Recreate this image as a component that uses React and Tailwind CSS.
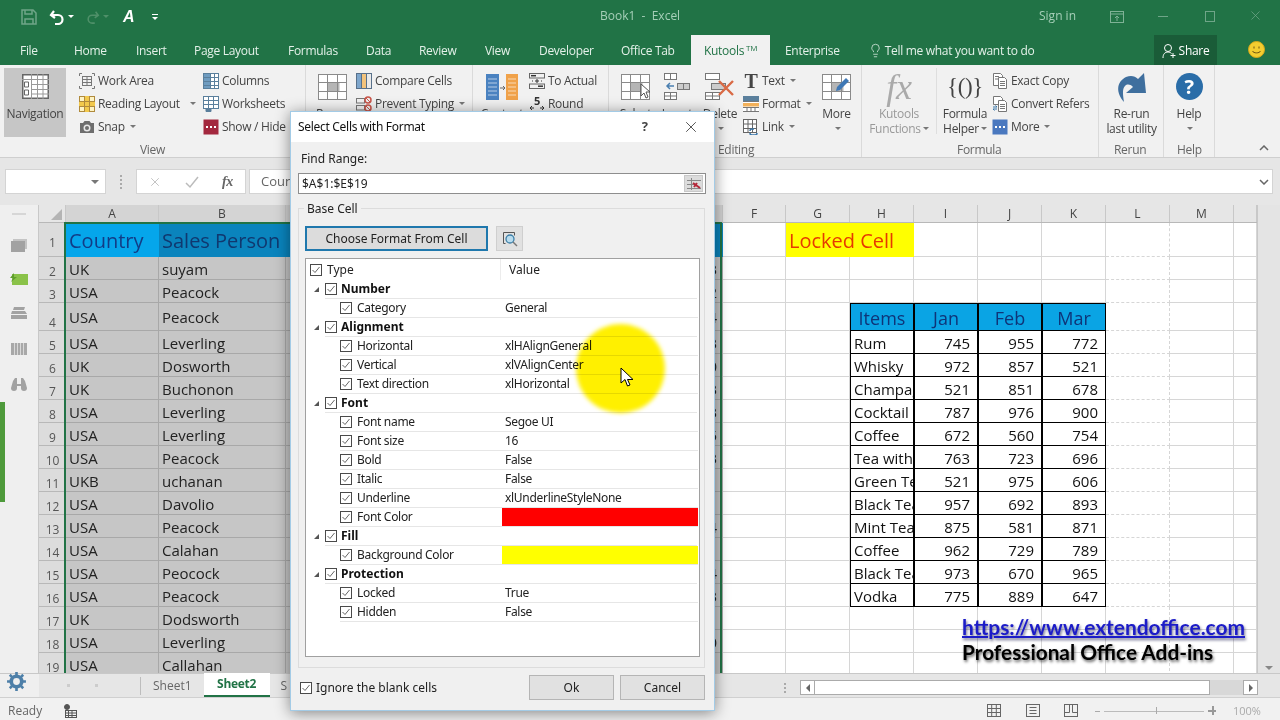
import { Lightbulb, X } from "lucide-react";

const COLS = ["w-[93px]", "w-[127px]", "w-[150px]", "w-[150px]", "w-[137px]", "w-[63px]", "w-[64px]", "w-[64px]", "w-[64px]", "w-[64px]", "w-[64px]", "w-[64px]", "w-[64px]", "w-[23px]"];
const LETTERS = ["A", "B", "C", "D", "E", "F", "G", "H", "I", "J", "K", "L", "M", ""];
const ROW_HEIGHTS = ["h-[34px]", "h-[23px]", "h-[23px]", "h-[28px]", "h-[23px]", "h-[23px]", "h-[23px]", "h-[23px]", "h-[23px]", "h-[23px]", "h-[23px]", "h-[23px]", "h-[23px]", "h-[23px]", "h-[23px]", "h-[23px]", "h-[23px]", "h-[23px]", "h-[23px]"];
const E_DIGITS = ["", "3", "2", "4", "3", "0", "3", "3", "5", "3", "1", "1", "4", "1", "4", "3", "1", "0", "1"];

const SALES = [
  ["Country", "Sales Person"],
  ["UK", "suyam"],
  ["USA", "Peacock"],
  ["USA", "Peacock"],
  ["USA", "Leverling"],
  ["UK", "Dosworth"],
  ["UK", "Buchonon"],
  ["USA", "Leverling"],
  ["USA", "Leverling"],
  ["USA", "Peacock"],
  ["UKB", "uchanan"],
  ["USA", "Davolio"],
  ["USA", "Peacock"],
  ["USA", "Calahan"],
  ["USA", "Peocock"],
  ["USA", "Peacock"],
  ["UK", "Dodsworth"],
  ["USA", "Leverling"],
  ["USA", "Callahan"],
];

const ITEMS = [
  ["Items", "Jan", "Feb", "Mar"],
  ["Rum", 745, 955, 772],
  ["Whisky", 972, 857, 521],
  ["Champagne", 521, 851, 678],
  ["Cocktail", 787, 976, 900],
  ["Coffee", 672, 560, 754],
  ["Tea with", 763, 723, 696],
  ["Green Tea", 521, 975, 606],
  ["Black Tea", 957, 692, 893],
  ["Mint Tea", 875, 581, 871],
  ["Coffee", 962, 729, 789],
  ["Black Tea", 973, 670, 965],
  ["Vodka", 775, 889, 647],
];

const TREE = [
  { group: "Number" },
  { name: "Category", value: "General" },
  { group: "Alignment" },
  { name: "Horizontal", value: "xlHAlignGeneral" },
  { name: "Vertical", value: "xlVAlignCenter" },
  { name: "Text direction", value: "xlHorizontal" },
  { group: "Font" },
  { name: "Font name", value: "Segoe UI" },
  { name: "Font size", value: "16" },
  { name: "Bold", value: "False" },
  { name: "Italic", value: "False" },
  { name: "Underline", value: "xlUnderlineStyleNone" },
  { name: "Font Color", swatch: "bg-[#ff0000]" },
  { group: "Fill" },
  { name: "Background Color", swatch: "bg-[#ffff00]" },
  { group: "Protection" },
  { name: "Locked", value: "True" },
  { name: "Hidden", value: "False" },
];

const TABS = [
  ["File", "w-[74px] pl-[20px]"],
  ["Home", "w-[62px]"],
  ["Insert", "w-[58px]"],
  ["Page Layout", "w-[94px]"],
  ["Formulas", "w-[78px]"],
  ["Data", "w-[53px]"],
  ["Review", "w-[66px]"],
  ["View", "w-[54px]"],
  ["Developer", "w-[82px]"],
  ["Office Tab", "w-[70px]"],
];

// little ribbon drawings
function GridIcon({ className = "w-[29px] h-[26px]", shade }) {
  return (
    <svg viewBox="0 0 29 26" className={className} fill="none" stroke="#8a8a8a" strokeWidth="1">
      <rect x="0.5" y="0.5" width="28" height="25" fill="#fff" />
      {shade && <rect x="9.5" y="8.5" width="12" height="9" fill="#b5b5b5" stroke="none" />}
      <path d="M9.5 0v26M19.5 0v26M0 8.5h29M0 17.5h29" />
    </svg>
  );
}

function SmallIcon({ kind }) {
  const base = "w-[16px] h-[16px] shrink-0";
  if (kind === "workarea") {
    return (
      <svg viewBox="0 0 16 16" className={base} fill="none" stroke="#777">
        <path d="M.5 3V.5H3M13 .5h2.5V3M.5 13v2.5H3M13 15.5h2.5V13" />
        <rect x="3.5" y="3.5" width="9" height="9" />
        <path d="M3.5 6.5h9M3.5 9.5h9M8 3.5v9" />
      </svg>
    );
  }
  if (kind === "reading") {
    return (
      <svg viewBox="0 0 16 16" className={base} fill="#fdf3c4" stroke="#b08a3c">
        <rect x=".5" y=".5" width="15" height="15" />
        <rect x="0" y="6" width="16" height="4" fill="#f2c94c" stroke="none" />
        <rect x="6" y="0" width="4" height="16" fill="#f2c94c" stroke="none" />
        <path d="M5.5 0v16M10.5 0v16M0 5.5h16M0 10.5h16" fill="none" />
      </svg>
    );
  }
  if (kind === "snap") {
    return (
      <svg viewBox="0 0 16 16" className={base}>
        <path d="M1 4h3l1.500-2h5L12 4h3v10H1z" fill="#6e6e6e" />
        <circle cx="8" cy="9" r="3.500" fill="#e8e8e8" />
        <circle cx="8" cy="9" r="2" fill="#6e6e6e" />
      </svg>
    );
  }
  if (kind === "columns") {
    return (
      <svg viewBox="0 0 16 16" className={base} fill="none" stroke="#5a7f9c">
        <rect x=".5" y=".5" width="15" height="15" fill="#fff" />
        <rect x="1" y="1" width="6" height="14" fill="#6f9cc0" stroke="none" />
        <path d="M7.500 0v16M11.500 0v16M0 4.500h16M0 8.500h16M0 12.500h16" />
      </svg>
    );
  }
  if (kind === "worksheets") {
    return (
      <svg viewBox="0 0 16 16" className={base} fill="#fff" stroke="#5a7f9c">
        <rect x=".5" y=".5" width="15" height="12" />
        <path d="M0 4.500h16M0 8.500h16M5.500 0v12M10.500 0v12" fill="none" />
        <path d="M3 13h5v2.500H3z" fill="#5a7f9c" />
      </svg>
    );
  }
  if (kind === "showhide") {
    return (
      <svg viewBox="0 0 16 16" className={base}>
        <rect width="15" height="15" x=".5" y=".5" fill="#a3283e" />
        <rect x="3" y="7" width="2" height="2" fill="#fff" />
        <rect x="7" y="7" width="2" height="2" fill="#fff" />
        <rect x="11" y="7" width="2" height="2" fill="#fff" />
      </svg>
    );
  }
  if (kind === "compare") {
    return (
      <svg viewBox="0 0 16 16" className={base} stroke="#58708a">
        <rect x=".5" y=".5" width="15" height="15" fill="#fff" />
        <rect x="1" y="1" width="4" height="14" fill="#7ea6cc" stroke="none" />
        <rect x="6" y="1" width="4" height="14" fill="#f3c37c" stroke="none" />
        <rect x="11" y="1" width="4" height="14" fill="#e9e9e9" stroke="none" />
        <path d="M5.500 0v16M10.500 0v16" fill="none" />
      </svg>
    );
  }
  if (kind === "prevent") {
    return (
      <svg viewBox="0 0 16 16" className={base} fill="none">
        <rect x=".5" y="2.500" width="8" height="4.500" stroke="#777" />
        <rect x=".5" y="9.500" width="8" height="4.500" stroke="#777" />
        <circle cx="12" cy="4" r="3" stroke="#c9564a" strokeWidth="1.500" />
        <circle cx="12" cy="12" r="3" stroke="#c9564a" strokeWidth="1.500" />
        <path d="M10 2l4 4M10 10l4 4" stroke="#c9564a" />
      </svg>
    );
  }
  if (kind === "actual") {
    return (
      <svg viewBox="0 0 16 16" className={base} fill="none" stroke="#666">
        <rect x=".5" y=".5" width="15" height="4.500" />
        <path d="M2 2.700h5" strokeWidth="1.500" stroke="#333" />
        <rect x=".5" y="11" width="15" height="4.500" />
        <path d="M9 13.200h5" strokeWidth="1.500" stroke="#333" />
        <path d="M8 6v4M6 8h4M3 8h1M12 8h1" stroke="#333" />
      </svg>
    );
  }
  if (kind === "round") {
    return (
      <svg viewBox="0 0 16 16" className={base} fill="none" stroke="#333">
        <path d="M1 12h4M1 12l2-2M1 12l2 2M11 12h4M15 12l-2-2M15 12l-2 2" />
        <text x="8" y="9" textAnchor="middle" fontSize="11" fontWeight="700" fill="#333" stroke="none" fontFamily="Open Sans">5</text>
      </svg>
    );
  }
  if (kind === "t") {
    return (
      <svg viewBox="0 0 16 16" className={base}>
        <text x="8" y="15" textAnchor="middle" fontSize="20" fontWeight="700" fill="#444" fontFamily="Liberation Serif">T</text>
      </svg>
    );
  }
  if (kind === "format") {
    return (
      <svg viewBox="0 0 16 16" className={base}>
        <rect width="16" height="16" fill="#fff" />
        <rect y="0" width="16" height="5" fill="#5a7f9c" />
        <rect y="7" width="16" height="3.500" fill="#f3b15a" />
        <path d="M0 5.500h16M0 11.500h16M0 15.500h16M4 11v5M8 11v5M12 11v5" stroke="#777" />
      </svg>
    );
  }
  if (kind === "link") {
    return (
      <svg viewBox="0 0 16 16" className={base} fill="none" stroke="#666">
        <rect x=".5" y=".5" width="13" height="13" fill="#fff" />
        <path d="M5 0v14M9.500 0v14M0 5h14M0 9.500h14" />
        <path d="M7 12a2 2 0 0 1 2-2h2M14 14a2 2 0 0 1-2 2h-3a2 2 0 0 1-2-2" stroke="#3a76a8" strokeWidth="1.500" />
      </svg>
    );
  }
  if (kind === "copy") {
    return (
      <svg viewBox="0 0 16 16" className={base} fill="#fff" stroke="#777">
        <path d="M1.500.5h7l2 2v10h-9z" />
        <path d="M6.500 4.500h6l2 2v9h-8z" />
        <path d="M3 3.500h4M3 6h3M8 8.500h5M8 10.500h5M8 12.500h5" fill="none" />
      </svg>
    );
  }
  if (kind === "refers") {
    return (
      <svg viewBox="0 0 16 16" className={base} fill="#fff" stroke="#777">
        <path d="M1.500.5h7l2 2v6h-9z" />
        <path d="M6.500 4.500h6l2 2v9h-8z" />
        <path d="M1 11h4l-1.500-1.500M5 13H1l1.500 1.500" fill="none" stroke="#3a76a8" />
        <path d="M8 8.500h5M8 10.500h5M8 12.500h5" fill="none" />
      </svg>
    );
  }
  return (
    <svg viewBox="0 0 16 16" className={base}>
      <rect width="15" height="15" x=".5" y=".5" fill="#4a78bf" />
      <rect x="3" y="7" width="2" height="2" fill="#fff" />
      <rect x="7" y="7" width="2" height="2" fill="#fff" />
      <rect x="11" y="7" width="2" height="2" fill="#fff" />
    </svg>
  );
}

function Caret({ className = "" }) {
  return <span className={`inline-block w-0 h-0 border-x-[3px] border-x-transparent border-t-[3px] border-t-[#777] ${className}`} />;
}

function RibbonItem({ icon, label, caret }) {
  return (
    <div className="h-[23px] flex items-center gap-[3px] whitespace-nowrap">
      <SmallIcon kind={icon} />
      <span>{label}</span>
      {caret && <Caret className="ml-[2px]" />}
    </div>
  );
}

function RibbonGroup({ className, label, labelClass = "", children }) {
  return (
    <div className={`relative h-full border-r border-[#dadada] shrink-0 ${className}`}>
      <div className="flex h-[73px] pt-[3px]">{children}</div>
      {label && <div className={`absolute top-[76px] text-[#666] text-[12px] ${labelClass}`}>{label}</div>}
    </div>
  );
}

function BigButton({ className, icon, lines, caret, muted }) {
  return (
    <div className={`flex flex-col items-center shrink-0 ${muted ? "text-[#999]" : ""} ${className}`}>
      <div className="h-[37px] flex items-center">{icon}</div>
      <div className="leading-[15px] mt-[1px] text-center whitespace-nowrap">{lines[0]}</div>
      <div className="leading-[15px] text-center whitespace-nowrap h-[15px] flex items-center">
        {lines[1]}
        {caret && <Caret className="ml-[2px]" />}
      </div>
    </div>
  );
}

function Check({ className = "" }) {
  return (
    <svg viewBox="0 0 12 12" className={`w-[12px] h-[12px] shrink-0 ${className}`} fill="#fff" stroke="#4a4a4a">
      <rect x=".5" y=".5" width="11" height="11" />
      <path d="M2.500 6l2.500 2.500 4.500-5.500" fill="none" stroke="#666" />
    </svg>
  );
}

function TreeRow({ row }) {
  if (row.group) {
    return (
      <div className="h-[19px] flex items-center pl-[8px]">
        <span className="w-0 h-0 border-l-[5px] border-l-transparent border-b-[5px] border-b-[#555] mr-[6px]" />
        <div className="flex-1 h-full flex items-center border-b border-[#e6e6e6] mr-[2px]">
          <Check />
          <span className="ml-[4px] font-bold text-[#111]">{row.group}</span>
        </div>
      </div>
    );
  }
  return (
    <div className="h-[19px] flex pl-[34px] pr-[1px] tracking-[-0.3px]">
      <div className="flex-1 flex border-b border-[#e6e6e6]">
        <div className="w-[162px] flex items-center">
          <Check />
          <span className="ml-[5px]">{row.name}</span>
        </div>
        {row.swatch ? <div className={`flex-1 ${row.swatch}`} /> : <div className="pl-[3px] flex items-center">{row.value}</div>}
      </div>
    </div>
  );
}

function Dialog() {
  return (
    <div className="absolute left-[290px] top-[111px] w-[425px] h-[600px] border border-[#a3cbe6] bg-[#f0f0f0] shadow-[0_2px_14px_rgba(0,0,0,0.45)] flex flex-col text-[12px] text-[#222] tracking-normal font-['Noto_Sans',sans-serif]">
      <div className="h-[30px] bg-white flex items-center pl-[7px] text-[#111] shrink-0">
        <span className="tracking-[-0.3px]">Select Cells with Format</span>
        <span className="ml-auto mr-[34px] font-bold text-[13px] text-[#444]">?</span>
        <X className="w-[18px] h-[18px] mr-[14px] text-[#333]" strokeWidth={1.1} />
      </div>
      <div className="pl-[10px] pt-[9px] h-[24px] leading-[15px] shrink-0">Find Range:</div>
      <div className="ml-[7px] mt-[7px] w-[408px] h-[21px] border border-[#8e8e8e] bg-white flex items-center pl-[3px] shrink-0">
        <span>$A$1:$E$19</span>
        <div className="ml-auto mr-[2px] w-[19px] h-[17px] bg-[#dcdcdc] border border-[#c8c8c8] flex items-center justify-center">
          <svg viewBox="0 0 14 12" className="w-[14px] h-[12px]" fill="none">
            <path d="M0 2.500h14M0 6.500h7M0 10.500h14M4.500 0v12" stroke="#888" />
            <path d="M6 5l7 5M7 9l3-4" stroke="#b5283a" strokeWidth="2" />
          </svg>
        </div>
      </div>
      {/* Base Cell */}
      <div className="relative ml-[7px] mt-[14px] w-[407px] h-[460px] border border-[#dcdcdc] shrink-0 pt-[17px] pl-[6px]">
        <span className="absolute left-[5px] -top-[8px] bg-[#f0f0f0] px-[3px] leading-[15px]">Base Cell</span>
        <div className="flex gap-[8px]">
          <div className="w-[183px] h-[25px] border-2 border-[#1f78ad] bg-[#dcdcdc] flex items-center justify-center">Choose Format From Cell</div>
          <div className="w-[27px] h-[25px] border border-[#cfcfcf] bg-[#e1e1e1] flex items-center justify-center">
            <svg viewBox="0 0 16 16" className="w-[16px] h-[16px]" fill="none" stroke="#555">
              <path d="M3.500 12.500h-2v-11h11v3" />
              <circle cx="8" cy="8" r="4" fill="#b9dcee" stroke="#3c7fa8" strokeWidth="1.300" />
              <path d="M11 11l4 4" stroke="#777" strokeWidth="1.500" />
            </svg>
          </div>
        </div>
        <div className="mt-[7px] w-[395px] h-[399px] border border-[#a0a0a0] bg-white">
          <div className="h-[21px] flex items-center pl-[4px]">
            <Check />
            <span className="ml-[5px] w-[173px]">Type</span>
            <span className="pl-[8px] border-l border-[#ececec] h-full flex items-center">Value</span>
          </div>
          {TREE.map((row, i) => (
            <TreeRow key={i} row={row} />
          ))}
        </div>
      </div>
      <div className="flex items-center mt-[7px] pl-[9px]">
        <Check />
        <span className="ml-[4px]">Ignore the blank cells</span>
        <div className="ml-auto w-[85px] h-[25px] bg-[#e1e1e1] border border-[#b5b5b5] flex items-center justify-center">Ok</div>
        <div className="ml-[6px] mr-[9px] w-[85px] h-[25px] bg-[#e1e1e1] border border-[#b5b5b5] flex items-center justify-center">Cancel</div>
      </div>
    </div>
  );
}

function itemCell(rowIndex, colIndex) {
  // rows 4-16 hold the small table in columns H-K
  const tableRow = ITEMS[rowIndex - 3];
  if (!tableRow) return null;
  return tableRow[colIndex - 7];
}

function Cell({ rowIndex, colIndex }) {
  let width = COLS[colIndex];
  const selected = colIndex < 5;
  const isHeader = rowIndex === 0;
  let cls = selected ? "bg-[#c6c6c6] border-[#a8a8a8] leading-[20px]" : "border-[#d6d6d6] leading-[20px]";
  let text = "";
  let align = "pl-[3px]";

  if (colIndex < 2) text = SALES[rowIndex][colIndex];
  if (colIndex === 4 && rowIndex > 0) {
    text = E_DIGITS[rowIndex];
    align = "justify-end pr-[5px]";
  }
  if (selected && isHeader) {
    cls = colIndex === 0 ? "bg-[#05a6eb] border-[#05a6eb] text-[#123c86] text-[20px]" : "bg-[#0a84bd] border-[#0a84bd] text-[#10386f] text-[20px]";
  }
  if (colIndex === 11) cls += " border-dashed";
  // row 4 is taller and its text sits a little higher
  if (rowIndex === 3) cls += " pb-[3px]";

  // Locked Cell is G1:H1 merged
  if (isHeader && colIndex === 7) return null;
  if (isHeader && colIndex === 6) {
    width = "w-[128px]";
    cls = "bg-[#ffff00] border-[#ffff00] text-[#e63a00] text-[20px]";
    text = "Locked Cell";
  }

  const tableValue = colIndex >= 7 && colIndex <= 10 ? itemCell(rowIndex, colIndex) : null;
  if (tableValue !== null && tableValue !== undefined) {
    text = tableValue;
    cls = "border-black border-l text-[#111] leading-[20px]";
    if (rowIndex === 3) {
      cls = "bg-[#0aa4e4] border-black border-l border-t text-[#0f3478] text-[18px] leading-[24px]";
      align = "justify-center";
    } else if (colIndex > 7) {
      align = "justify-end pr-[7px]";
    }
    if (colIndex === 10) cls += " border-r";
  }

  return (
    <div className={`${width} h-full shrink-0 border-b border-r flex items-end overflow-hidden whitespace-nowrap ${cls} ${align}`}>
      {text}
    </div>
  );
}

function Sheet() {
  return (
    <div className="relative flex-1 min-w-0 flex flex-col tracking-normal">
      {/* column letters */}
      <div className="h-[18px] flex text-[12px] text-[#444] shrink-0 bg-[#e6e6e6] border-b border-[#b8b8b8]">
        <div className="w-[27px] relative shrink-0 border-r border-[#c8c8c8]">
          <div className="absolute right-[3px] bottom-[2px] w-0 h-0 border-l-[11px] border-l-transparent border-b-[11px] border-b-[#b4b4b4]" />
        </div>
        {LETTERS.map((letter, i) => (
          <div key={i} className={`${COLS[i]} shrink-0 flex items-center justify-center border-r border-[#c8c8c8] ${i < 5 ? "bg-[#d4d4d4]" : ""}`}>
            {letter}
          </div>
        ))}
      </div>
      {/* rows */}
      <div className="text-[15px] text-[#222] overflow-hidden flex-1">
        {ROW_HEIGHTS.map((rowHeight, r) => (
          <div key={r} className={`${rowHeight} flex`}>
            <div className={`w-[27px] shrink-0 bg-[#dcdcdc] border-b border-[#b8b8b8] flex items-end justify-center text-[12px] leading-[14px] text-[#555] ${r === 0 ? "pb-[6px]" : ""}`}>{r + 1}</div>
            {COLS.map((_, c) => (
              <Cell key={c} rowIndex={r} colIndex={c} />
            ))}
          </div>
        ))}
      </div>
      {/* selection outline */}
      <div className="absolute left-[25px] top-[17px] w-[658px] h-[470px] border-2 border-[#217346] pointer-events-none" />
    </div>
  );
}

export default function App() {
  return (
    <div className="relative w-[1280px] h-[720px] overflow-hidden bg-white flex flex-col text-[12px] tracking-[-0.3px] text-[#444] font-['Open_Sans',sans-serif]">
      {/* Title bar */}
      <div className="h-[33px] bg-[#217346] flex items-center shrink-0 relative text-[#a6cfb8]">
        <svg viewBox="0 0 16 16" className="w-[16px] h-[16px] ml-[21px]" fill="none" stroke="#6fa588" strokeWidth="1.500">
          <path d="M1 1h11l3 3v11H1z" />
          <path d="M4 1v4h7V1M4 15v-5h8v5" />
        </svg>
        <svg viewBox="0 0 16 16" className="w-[16px] h-[16px] ml-[12px]" fill="none" stroke="#fff" strokeWidth="2.200">
          <path d="M5 2L2 6l4 3M2 6h7a4 4 0 0 1 0 9H6" />
        </svg>
        <Caret className="ml-[3px] !border-t-white" />
        <svg viewBox="0 0 16 16" className="w-[14px] h-[14px] ml-[12px]" fill="none" stroke="#4f9069" strokeWidth="1.800">
          <path d="M11 2l3 4-4 3M14 6H7a4 4 0 0 0 0 9h3" />
        </svg>
        <Caret className="ml-[3px] !border-t-[#4f9069]" />
        <span className="ml-[14px] text-white font-bold italic text-[16px] font-['Liberation_Sans',sans-serif]">A</span>
        <span className="ml-[18px] flex flex-col items-center gap-[2px]">
          <span className="w-[6px] h-[1px] bg-white" />
          <Caret className="!border-t-white" />
        </span>
        <div className="absolute left-[600px] top-[7px] tracking-normal">Book1&nbsp; -&nbsp; Excel</div>
        <div className="absolute left-[1039px] top-[7px] tracking-normal">Sign in</div>
        <svg viewBox="0 0 14 12" className="absolute left-[1110px] top-[11px] w-[14px] h-[12px]" fill="none" stroke="#7fb296">
          <rect x=".5" y=".5" width="13" height="11" />
          <path d="M1 3h12M7 10V5M5 7l2-2 2 2" />
        </svg>
        <div className="absolute left-[1158px] top-[16px] w-[10px] h-[1px] bg-[#6fa588]" />
        <div className="absolute left-[1205px] top-[11px] w-[10px] h-[11px] border border-[#6fa588]" />
        <X className="absolute left-[1248px] top-[8px] w-[15px] h-[15px] text-[#6fa588]" strokeWidth={1.2} />
      </div>

      {/* Tabs */}
      <div className="h-[32px] bg-[#217346] flex shrink-0 text-[#e4f1e9] relative">
        {TABS.map(([name, cls]) => (
          <div key={name} className={`${cls} shrink-0 flex items-center whitespace-nowrap pt-[3px]`}>
            {name}
          </div>
        ))}
        <div className="w-[79px] shrink-0 mt-[2px] bg-[#f1f1f1] text-[#217346] flex items-center pl-[13px] pt-[1px] whitespace-nowrap">
          Kutools <span className="text-[8px] ml-[2px] -mt-[5px]">TM</span>
        </div>
        <div className="shrink-0 ml-[15px] flex items-center pt-[3px]">Enterprise</div>
        <div className="shrink-0 ml-[28px] flex items-center gap-[2px] pt-[3px]">
          <Lightbulb className="w-[15px] h-[15px]" strokeWidth={1.2} />
          <span>Tell me what you want to do</span>
        </div>
        <div className="absolute left-[1154px] top-[2px] w-[63px] h-[30px] bg-[#1a5c38] flex items-center justify-center gap-[3px] text-white pt-[1px]">
          <svg viewBox="0 0 14 16" className="w-[14px] h-[16px]" fill="none" stroke="#fff">
            <circle cx="6" cy="5" r="3.500" />
            <path d="M1 15c0-4 2-6 5-6 1.500 0 2.500.5 3.500 1.500M11 10v5M8.500 12.500h5" />
          </svg>
          <span>Share</span>
        </div>
        <div className="absolute left-[1248px] top-[8px] w-[17px] h-[17px] rounded-full bg-[#f3cd30] border border-[#d8a818] flex items-center justify-center">
          <svg viewBox="0 0 15 15" className="w-[15px] h-[15px]" fill="none" stroke="#6b5210">
            <path d="M5 4.500v2M10 4.500v2" />
            <path d="M3.500 9c1 2.500 7 2.500 8 0" />
          </svg>
        </div>
      </div>

      {/* Ribbon */}
      <div className="h-[93px] bg-[#f1f1f1] border-b border-[#cfcfcf] flex shrink-0">
        <RibbonGroup className="w-[306px] pl-[4px]" label="View" labelClass="left-[140px]">
          <div className="w-[62px] h-[69px] bg-[#c6c6c6] flex flex-col items-center shrink-0">
            <svg viewBox="0 0 27 25" className="w-[27px] h-[25px] mt-[6px]" fill="#fff" stroke="#666">
              <rect x=".5" y=".5" width="26" height="24" strokeWidth="2" />
              <path d="M9.500 0v25M15.500 0v25M21 0v25M0 5.500h27M9 10.500h18M9 15.500h18M9 20h18" fill="none" stroke="#999" />
              <path d="M2.500 8h4v5h-4zM2.500 16h4v5h-4z" fill="none" />
            </svg>
            <div className="mt-[7px] leading-[15px]">Navigation</div>
          </div>
          <div className="ml-[13px] w-[124px] shrink-0 mt-[1px]">
            <RibbonItem icon="workarea" label="Work Area" />
            <div className="flex items-center">
              <RibbonItem icon="reading" label="Reading Layout" />
              <Caret className="ml-[10px]" />
            </div>
            <RibbonItem icon="snap" label="Snap" caret />
          </div>
          <div className="shrink-0 mt-[1px]">
            <RibbonItem icon="columns" label="Columns" />
            <RibbonItem icon="worksheets" label="Worksheets" />
            <RibbonItem icon="showhide" label="Show / Hide" />
          </div>
        </RibbonGroup>

        <RibbonGroup className="w-[167px] pl-[12px]">
          <BigButton className="w-[29px]" icon={<GridIcon shade />} lines={["Range", ""]} />
          <div className="ml-[9px] mt-[1px]">
            <RibbonItem icon="compare" label="Compare Cells" />
            <RibbonItem icon="prevent" label="Prevent Typing" caret />
          </div>
        </RibbonGroup>

        <RibbonGroup className="w-[136px] pl-[13px]">
          <BigButton
            className="w-[32px]"
            icon={
              <svg viewBox="0 0 32 26" className="w-[32px] h-[26px]">
                <rect x="0" y="0" width="13" height="26" fill="#4a82c0" />
                <rect x="20" y="0" width="12" height="26" fill="#f0a24a" />
                <path d="M2 5h9M2 9h9M2 13h9M2 17h9M2 21h9M22 5h8M22 9h8M22 13h8M22 17h8M22 21h8" stroke="#fff" opacity=".6" />
                <path d="M14 14h5M17 12l2 2-2 2" stroke="#666" fill="none" />
              </svg>
            }
            lines={["Content", ""]}
          />
          <div className="ml-[11px] mt-[1px]">
            <RibbonItem icon="actual" label="To Actual" />
            <RibbonItem icon="round" label="Round" />
          </div>
        </RibbonGroup>

        <RibbonGroup className="w-[253px] pl-[12px]" label="Editing" labelClass="left-[109px]">
          <BigButton
            className="w-[29px]"
            icon={
              <div className="relative">
                <GridIcon shade />
                <svg viewBox="0 0 12 16" className="absolute left-[19px] top-[9px] w-[12px] h-[16px]" fill="#fff" stroke="#555">
                  <path d="M1 1v12l3-3 2 5 2-1-2-5h4z" />
                </svg>
              </div>
            }
            lines={["Select", ""]}
          />
          <BigButton
            className="w-[26px] ml-[14px]"
            icon={
              <svg viewBox="0 0 26 27" className="w-[26px] h-[27px]" fill="#fff" stroke="#777">
                <rect x=".5" y=".5" width="12" height="6" />
                <path d="M6.500 0v7" />
                <path d="M10 13H3M6 10l-3 3 3 3" fill="none" stroke="#4a7fb0" strokeWidth="1.500" />
                <rect x="13.500" y="10.500" width="12" height="6" fill="#ccc" />
                <path d="M19.500 10v7" />
                <rect x=".5" y="19.500" width="12" height="7" />
                <path d="M6.500 19v8M0 23h13" />
              </svg>
            }
            lines={["Insert", ""]}
          />
          <BigButton
            className="w-[30px] ml-[15px]"
            icon={
              <svg viewBox="0 0 30 27" className="w-[30px] h-[27px]" fill="#fff" stroke="#777">
                <rect x=".5" y=".5" width="14" height="6" />
                <rect x="6.500" y="10.500" width="14" height="6" fill="#ccc" />
                <rect x=".5" y="19.500" width="14" height="7" />
                <path d="M7.500 19v8M0 23h15" />
                <path d="M14 8l14 14M28 8L14 22" stroke="#d96a45" strokeWidth="2.400" />
              </svg>
            }
            lines={["Delete", ""]}
            caret
          />
          <div className="ml-[8px] w-[79px] shrink-0 mt-[1px]">
            <RibbonItem icon="t" label="Text" caret />
            <RibbonItem icon="format" label="Format" caret />
            <RibbonItem icon="link" label="Link" caret />
          </div>
          <BigButton
            className="w-[29px]"
            icon={
              <div className="relative">
                <GridIcon shade />
                <svg viewBox="0 0 18 18" className="absolute left-[11px] top-[2px] w-[18px] h-[18px]">
                  <path d="M3 15l1-4L13 2l3 3-9 9z" fill="#3f78b5" />
                </svg>
              </div>
            }
            lines={["More", ""]}
            caret
          />
        </RibbonGroup>

        <RibbonGroup className="w-[237px]" label="Formula" labelClass="left-[95px]">
          <BigButton
            className="w-[74px]"
            muted
            icon={<span className="text-[36px] leading-[36px] italic text-[#aaa] font-['Liberation_Serif',serif]">fx</span>}
            lines={["Kutools", "Functions"]}
            caret
          />
          <div className="w-[1px] h-[66px] bg-[#dedede]" />
          <BigButton
            className="w-[56px]"
            icon={<span className="text-[23px] leading-[30px] text-[#444] font-['Liberation_Serif',serif]">{"{()}"}</span>}
            lines={["Formula", "Helper"]}
            caret
          />
          <div className="ml-[-1px] mt-[1px]">
            <RibbonItem icon="copy" label="Exact Copy" />
            <RibbonItem icon="refers" label="Convert Refers" />
            <RibbonItem icon="more" label="More" caret />
          </div>
        </RibbonGroup>

        <RibbonGroup className="w-[65px]" label="Rerun" labelClass="left-[15px]">
          <BigButton
            className="w-[65px]"
            icon={
              <svg viewBox="0 0 34 32" className="w-[34px] h-[32px]">
                <path d="M9 31C1 22 1 11 11 6c5-2 9-1 12 2l6-6 2 20H11l7-6c-3-3-6-3-8-1-3 3-2 9-1 16z" fill="#3f6f9e" />
              </svg>
            }
            lines={["Re-run", "last utility"]}
          />
        </RibbonGroup>

        <RibbonGroup className="w-[51px]" label="Help" labelClass="left-[13px]">
          <BigButton
            className="w-[50px]"
            icon={
              <div className="w-[27px] h-[27px] rounded-full bg-[#2a6da8] text-white font-bold text-[20px] flex items-center justify-center">?</div>
            }
            lines={["Help", ""]}
            caret
          />
        </RibbonGroup>

        <div className="flex-1 relative">
          <svg viewBox="0 0 10 6" className="absolute left-[44px] top-[80px] w-[10px] h-[6px]" fill="none" stroke="#666" strokeWidth="1.500">
            <path d="M1 5l4-4 4 4" />
          </svg>
        </div>
      </div>

      {/* Formula bar */}
      <div className="h-[47px] bg-[#e6e6e6] flex items-center shrink-0 text-[#666]">
        <div className="ml-[5px] w-[101px] h-[25px] bg-white border border-[#d4d4d4] flex items-center justify-end pr-[6px]">
          <Caret className="!border-x-[4px] !border-t-[4px]" />
        </div>
        <div className="ml-[14px] w-[2px] h-[14px] border-l-2 border-dotted border-[#aaa]" />
        <div className="ml-[14px] w-[110px] h-[25px] bg-white border border-[#d4d4d4] flex items-center text-[#bbb]">
          <X className="ml-[11px] w-[14px] h-[14px]" strokeWidth={1.5} />
          <svg viewBox="0 0 14 14" className="ml-[23px] w-[14px] h-[14px]" fill="none" stroke="#bbb" strokeWidth="1.500">
            <path d="M1 8l4 4 8-10" />
          </svg>
          <span className="ml-[23px] italic font-bold text-[14px] text-[#666] font-['Liberation_Serif',serif]">fx</span>
        </div>
        <div className="ml-[3px] flex-1 mr-[7px] h-[25px] bg-white border border-[#d4d4d4] flex items-center pl-[11px] text-[13px] tracking-normal">
          <span>Country</span>
          <svg viewBox="0 0 10 6" className="ml-auto mr-[3px] w-[10px] h-[6px]" fill="none" stroke="#666" strokeWidth="1.500">
            <path d="M1 1l4 4 4-4" />
          </svg>
        </div>
      </div>

      {/* Sheet area */}
      <div className="h-[468px] flex shrink-0">
        <div className="w-[39px] shrink-0 bg-[#efefef] border-r border-[#c8c8c8] relative flex flex-col items-center">
          <div className="mt-[8px] w-[14px] border-t-2 border-[#d6d6d6]" />
          <svg viewBox="0 0 16 13" className="mt-[24px] w-[16px] h-[13px]" fill="#a2a2a2">
            <rect x="2" y="0" width="14" height="10" fill="#c4c4c4" />
            <rect x="0" y="2" width="14" height="11" />
          </svg>
          <svg viewBox="0 0 18 12" className="mt-[21px] w-[18px] h-[12px]">
            <rect x="2" y="1" width="16" height="11" fill="#8ac249" />
            <path d="M4 0L0 5h3L1 9l6-5H4z" fill="#5f9e2e" />
          </svg>
          <svg viewBox="0 0 16 12" className="mt-[22px] w-[16px] h-[12px]" fill="#a2a2a2">
            <path d="M3 0h11l-1 3H2zM1 4h13l2 3H0zM0 8h16v4H0z" />
          </svg>
          <svg viewBox="0 0 16 12" className="mt-[24px] w-[16px] h-[12px]" fill="#a8a8a8" stroke="#d8d8d8">
            <rect x="0" y="0" width="16" height="12" stroke="none" />
            <path d="M3.500 0v12M6.500 0v12M9.500 0v12M12.500 0v12" />
          </svg>
          <svg viewBox="0 0 16 13" className="mt-[23px] w-[16px] h-[13px]" fill="#a2a2a2">
            <path d="M2 3l2-3h2v6h4V0h2l2 3 2 7a3 3 0 0 1-6 0V8H6v2a3 3 0 0 1-6 0z" />
          </svg>
          <div className="absolute left-0 top-[197px] w-[5px] h-[100px] bg-[#4e9a3b]" />
        </div>
        <Sheet />
        <div className="w-[23px] shrink-0 bg-[#e4e4e4] border-l border-[#c8c8c8] flex flex-col justify-end items-center pb-[3px]">
          <Caret className="!border-x-[4px] !border-t-[4px] !border-t-[#888]" />
        </div>
      </div>

      {/* Sheet tabs */}
      <div className="h-[24px] bg-[#e6e6e6] border-t border-[#c8c8c8] flex items-center shrink-0 relative">
        <div className="w-[39px] h-[23px] shrink-0 bg-[#efefef] flex items-center pl-[6px]">
          <svg viewBox="0 0 20 20" className="w-[21px] h-[21px] -mt-[9px]" fill="none" stroke="#4d7fa8" strokeWidth="3.500">
            <circle cx="10" cy="10" r="5" />
            <path d="M10 1v3M10 16v3M1 10h3M16 10h3M3.600 3.600l2 2M14.400 14.400l2 2M3.600 16.400l2-2M14.400 5.600l2-2" strokeWidth="2.500" />
          </svg>
        </div>
        <span className="ml-[28px] w-[3px] h-[3px] bg-[#ccc]" />
        <span className="ml-[25px] w-[3px] h-[3px] bg-[#ccc]" />
        <div className="ml-[42px] w-[1px] h-[18px] bg-[#bdbdbd]" />
        <span className="ml-[12px] text-[#666] tracking-normal">Sheet1</span>
        <div className="ml-[12px] w-[66px] h-[24px] -mt-[1px] bg-white border-b-2 border-[#217346] font-bold text-[#217346] flex items-center justify-center">Sheet2</div>
        <span className="ml-[11px] text-[#666]">S</span>
        {/* horizontal scrollbar */}
        <div className="absolute left-[784px] top-[6px] flex items-center h-[15px]">
          <div className="w-[2px] h-[10px] border-l-2 border-dotted border-[#aaa]" />
          <div className="ml-[14px] w-[15px] h-[15px] bg-white border border-[#ababab] flex items-center justify-center">
            <span className="w-0 h-0 border-y-[4px] border-y-transparent border-r-[4px] border-r-[#666]" />
          </div>
          <div className="w-[395px] h-[15px] bg-white border-y border-r border-[#ababab]" />
          <div className="w-[33px] h-[15px] bg-[#d8d8d8]" />
          <div className="w-[15px] h-[15px] bg-white border border-[#ababab] flex items-center justify-center">
            <span className="w-0 h-0 border-y-[4px] border-y-transparent border-l-[4px] border-l-[#666]" />
          </div>
        </div>
      </div>

      {/* Status bar */}
      <div className="flex-1 bg-[#f1f1f1] border-t border-[#d0d0d0] flex items-center pt-[3px] text-[12px] tracking-normal text-[#666] relative">
        <span className="ml-[8px]">Ready</span>
        <svg viewBox="0 0 14 14" className="ml-[22px] w-[14px] h-[14px]" fill="none" stroke="#555">
          <circle cx="3" cy="3" r="2.500" fill="#555" />
          <rect x="1.500" y="6.500" width="11" height="7" />
          <path d="M1 9h12M1 11.500h12M4.500 6v8M8 6v8" />
        </svg>
        <svg viewBox="0 0 14 13" className="absolute left-[987px] top-[6px] w-[14px] h-[13px]" fill="none" stroke="#666">
          <rect x=".5" y=".5" width="13" height="12" />
          <path d="M4.700 0v13M9.300 0v13M0 4.500h14M0 8.500h14" />
        </svg>
        <svg viewBox="0 0 14 13" className="absolute left-[1026px] top-[6px] w-[14px] h-[13px]" fill="none" stroke="#666">
          <rect x=".5" y=".5" width="13" height="12" />
          <path d="M3.500 3.500h7M3.500 6.500h7M3.500 9.500h7" />
        </svg>
        <svg viewBox="0 0 14 13" className="absolute left-[1064px] top-[6px] w-[14px] h-[13px]" fill="none" stroke="#666">
          <rect x=".5" y=".5" width="13" height="12" />
          <path d="M.5 8.500h5V0M8.500 0v8.500h5" />
        </svg>
        <div className="absolute left-[1095px] top-[12px] flex items-center">
          <span className="w-[5px] h-[1px] bg-[#aaa]" />
          <span className="ml-[4px] w-[100px] h-[1px] bg-[#bbb]" />
          <span className="ml-[4px] w-[8px] h-[2px] bg-[#999]" />
        </div>
        <div className="absolute left-[1156px] top-[9px] w-[1px] h-[7px] bg-[#aaa]" />
        <div className="absolute left-[1212px] top-[8px] w-[2px] h-[9px] bg-[#999]" />
        <span className="absolute left-[1233px] top-[5px] text-[11px] text-[#aaa]">100%</span>
      </div>

      <Dialog />

      {/* Yellow pointer spotlight */}
      <div className="absolute left-[576px] top-[324px] w-[89px] h-[89px] rounded-full bg-[#fff000] mix-blend-multiply blur-[2px]" />
      <svg viewBox="0 0 14 21" className="absolute left-[620px] top-[367px] w-[14px] h-[21px]" fill="#fff" stroke="#000">
        <path d="M1 1v15l4-3.500L7.500 19l2.500-1-2.500-5.500H13z" />
      </svg>

      {/* Watermark */}
      <div className="absolute left-[962px] top-[613px] font-['Lato',sans-serif] font-bold whitespace-nowrap tracking-normal">
        <div className="text-[20.900px] leading-[27px] text-[#1c1cc8] underline decoration-2 [text-shadow:1px_2px_3px_rgba(0,0,60,0.6)]">https://www.extendoffice.com</div>
        <div className="text-[20.800px] leading-[24px] text-black [text-shadow:1px_2px_3px_rgba(0,0,0,0.6)]">Professional Office Add-ins</div>
      </div>
    </div>
  );
}
